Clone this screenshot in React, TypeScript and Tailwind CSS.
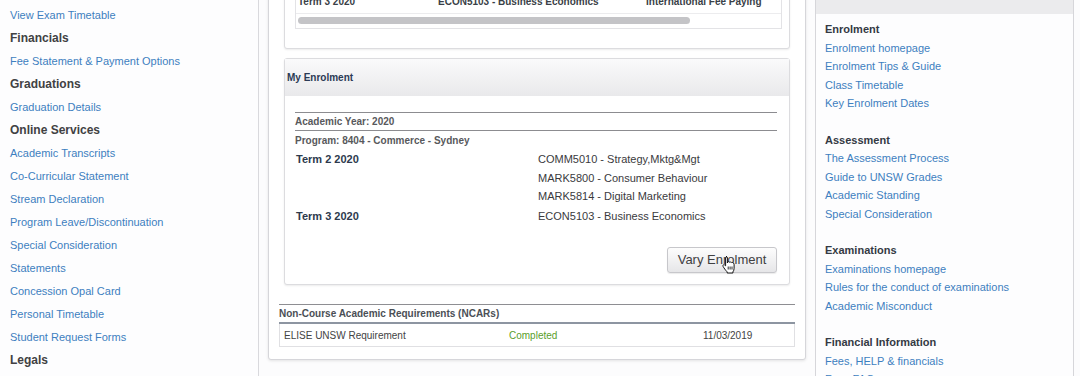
import type { ReactNode } from 'react';

const font = "font-['Liberation_Sans',Arial,Helvetica,sans-serif]";

type NavItem = { label: string; heading?: boolean };

const leftNav: NavItem[] = [
  { label: 'View Exam Timetable' },
  { label: 'Financials', heading: true },
  { label: 'Fee Statement & Payment Options' },
  { label: 'Graduations', heading: true },
  { label: 'Graduation Details' },
  { label: 'Online Services', heading: true },
  { label: 'Academic Transcripts' },
  { label: 'Co-Curricular Statement' },
  { label: 'Stream Declaration' },
  { label: 'Program Leave/Discontinuation' },
  { label: 'Special Consideration' },
  { label: 'Statements' },
  { label: 'Concession Opal Card' },
  { label: 'Personal Timetable' },
  { label: 'Student Request Forms' },
  { label: 'Legals', heading: true },
];

const linkGroups = [
  {
    title: 'Enrolment',
    links: ['Enrolment homepage', 'Enrolment Tips & Guide', 'Class Timetable', 'Key Enrolment Dates'],
  },
  {
    title: 'Assessment',
    links: ['The Assessment Process', 'Guide to UNSW Grades', 'Academic Standing', 'Special Consideration'],
  },
  {
    title: 'Examinations',
    links: ['Examinations homepage', 'Rules for the conduct of examinations', 'Academic Misconduct'],
  },
  {
    title: 'Financial Information',
    links: ['Fees, HELP & financials', 'Fees FAQs'],
  },
];

const terms = [
  {
    term: 'Term 2 2020',
    courses: ['COMM5010 - Strategy,Mktg&Mgt', 'MARK5800 - Consumer Behaviour', 'MARK5814 - Digital Marketing'],
  },
  { term: 'Term 3 2020', courses: ['ECON5103 - Business Economics'] },
];

function Card({ children, className = '' }: { children: ReactNode; className?: string }) {
  return (
    <div
      className={`rounded-[3px] border border-[#dcdcdf] bg-white shadow-[0_1px_2px_rgba(0,0,0,0.08)] ${className}`}
    >
      {children}
    </div>
  );
}

// pointing-hand cursor sitting over the button
function HandCursor() {
  return (
    <svg width="16" height="19" viewBox="0 0 16 19" className="pointer-events-none absolute left-[53px] top-[7px]">
      <path
        d="M5 1.5c.8 0 1.4.6 1.4 1.4V8l.1-1c.7-.5 1.7-.4 2.2.3.6-.4 1.5-.3 2 .3.6-.3 1.5-.1 1.9.5.4.5.5 1.1.5 1.7v3.4c0 1.5-.4 2.7-1.2 3.7v1.1H6.2v-1.1c-.9-.8-2.1-2.3-3.3-4.1-.5-.7-1.1-1.5-1-2.2.1-.8 1.1-1.2 1.8-.6l.9.8V2.9c0-.8.6-1.4 1.4-1.4z"
        fill="#fff"
        stroke="#111"
        strokeWidth="1"
        strokeLinejoin="round"
      />
      <path d="M7.2 11.5v3M9.1 11.5v3M11 11.5v3" stroke="#111" strokeWidth="0.9" />
    </svg>
  );
}

export default function App() {
  return (
    <div className={`flex h-[376px] w-[1080px] overflow-hidden bg-[#fcfcfd] text-[#333] ${font}`}>
      {/* left navigation */}
      <aside className="h-full w-[259px] shrink-0 border-r border-[#d9d9dd] bg-[#fdfdfe] pl-[10px] pt-[4px]">
        <ul>
          {leftNav.map((item) =>
            item.heading ? (
              <li key={item.label} className="h-[23px] text-[12px] font-bold leading-[23px] text-[#414143]">
                {item.label}
              </li>
            ) : (
              <li key={item.label} className="h-[23px] text-[11px] leading-[23px] text-[#3d7fc0]">
                {item.label}
              </li>
            ),
          )}
        </ul>
      </aside>

      {/* main column */}
      <main className="w-[556px] shrink-0 pl-[9px] pr-[9px]">
        <div className="-mt-[50px] rounded-[3px] border border-[#d6d6da] bg-white px-[10px] pb-[12px] pt-[10px] shadow-[0_1px_3px_rgba(0,0,0,0.1)]">
          {/* previous card (scrolled off) */}
          <Card className="mx-[5px] h-[88px] pl-[10px] pr-[7px] pt-[10px]">
            <div className="border border-[#e3e3e6] text-[10px] font-bold text-[#3a3f47]">
              <div className="h-[20px] border-b border-[#ececee]" />
              <div className="flex h-[21px] items-end border-b border-[#ececee] pb-[4px]">
                <span className="w-[142px] pl-[2px]">Term 3 2020</span>
                <span className="w-[208px]">ECON5103 - Business Economics</span>
                <span>International Fee Paying</span>
              </div>
              <div className="h-[14px] pl-[2px] pt-[3px]">
                <div className="h-[7px] w-[392px] rounded-full bg-[#c4c4c7]" />
              </div>
            </div>
          </Card>

          {/* My Enrolment */}
          <Card className="mx-[5px] mt-[9px] h-[227px]">
            <div className="flex h-[37px] items-center bg-gradient-to-b from-[#fafafb] to-[#e9e9eb] pl-[2px] text-[10px] font-bold text-[#2b3a55]">
              My Enrolment
            </div>
            <div className="pl-[10px] pr-[12px] pt-[16px]">
              <div className="flex h-[19px] items-center border-y border-[#8c8c90] text-[10px] font-bold text-[#58595c]">
                Academic Year: 2020
              </div>
              <div className="flex h-[19px] items-center text-[10px] font-bold text-[#58595c]">
                Program: 8404 - Commerce - Sydney
              </div>
              {terms.map((t, i) => (
                <div key={t.term} className={`flex ${i > 0 ? 'mt-[1px]' : ''}`}>
                  <div className="h-[19px] w-[243px] pl-[1px] text-[11px] font-bold leading-[19px] text-[#2d3a4d]">
                    {t.term}
                  </div>
                  <div>
                    {t.courses.map((c) => (
                      <div key={c} className="h-[18.5px] text-[11px] leading-[19px] text-[#3a3a3d]">
                        {c}
                      </div>
                    ))}
                  </div>
                </div>
              ))}
              <div className="mt-[21px] flex justify-end">
                <button className="relative h-[26px] w-[110px] rounded-[3px] border border-[#c7c7cb] bg-gradient-to-b from-[#fdfdfd] to-[#e6e6e8] text-[13px] text-[#404042] shadow-[0_1px_1px_rgba(0,0,0,0.08)]">
                  Vary Enrolment
                  <HandCursor />
                </button>
              </div>
            </div>
          </Card>

          {/* NCARs */}
          <section className="mt-[19px]">
            <div className="flex h-[20px] items-center border-t border-b-2 border-t-[#8e8e92] border-b-[#8d95a1] text-[10px] font-bold text-[#4b4f56]">
              Non-Course Academic Requirements (NCARs)
            </div>
            <div className="flex h-[23px] items-center border-x border-b border-[#e0e0e3] pl-[4px] text-[10px]">
              <span className="w-[225px] text-[#444]">ELISE UNSW Requirement</span>
              <span className="w-[194px] text-[#5a9e2c]">Completed</span>
              <span className="text-[#444]">11/03/2019</span>
            </div>
          </section>
        </div>
      </main>

      {/* right links panel */}
      <aside className="h-full w-[259px] shrink-0 border-x border-[#d6d6da] bg-[#fdfdfe]">
        <div className="h-[14px] bg-[#ebebed]" />
        <div className="pl-[9px] pt-[6px]">
          {linkGroups.map((g, i) => (
            <div key={g.title} className={i > 0 ? 'mt-[18px]' : ''}>
              <div className="h-[18.5px] text-[11px] font-bold leading-[18px] text-[#343a44]">{g.title}</div>
              {g.links.map((l) => (
                <div key={l} className="h-[18.5px] text-[11px] leading-[18px] text-[#3d7fc0]">
                  {l}
                </div>
              ))}
            </div>
          ))}
        </div>
      </aside>
      <div className="h-full flex-1 bg-[#fcfcfd]" />
    </div>
  );
}
